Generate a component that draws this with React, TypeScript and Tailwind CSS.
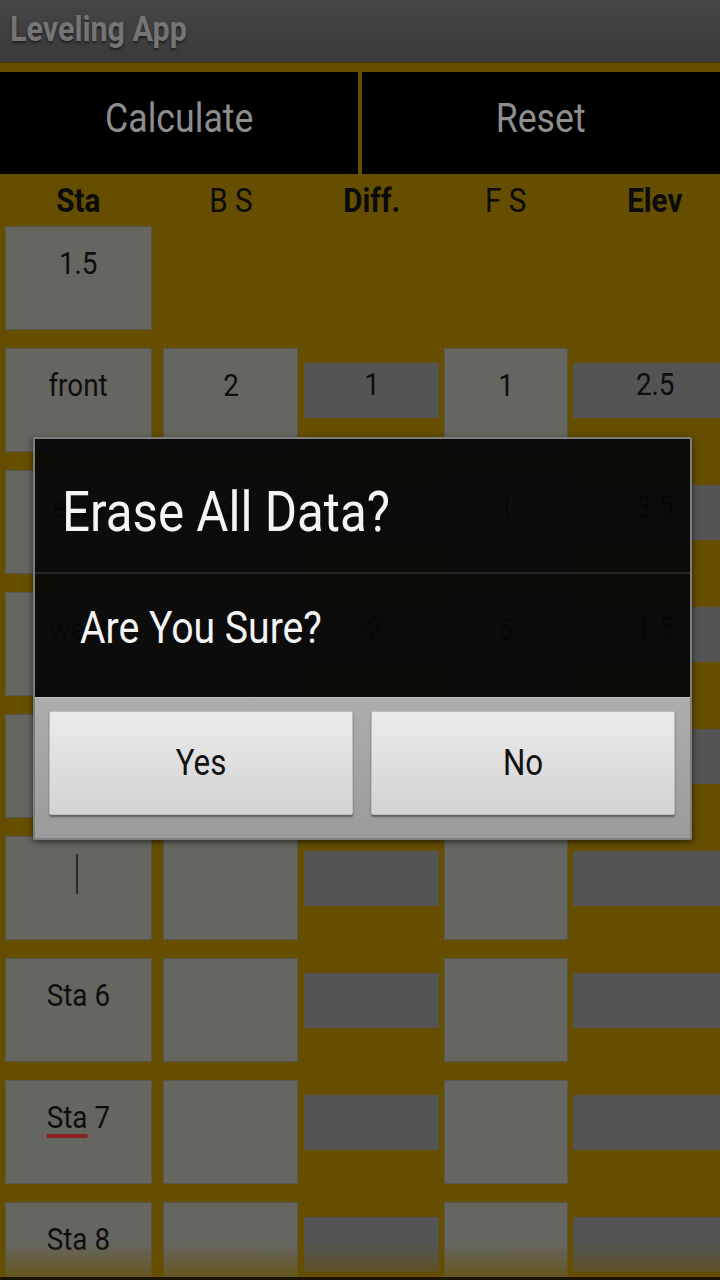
import React from "react";

type TProps = { children?: React.ReactNode; className?: string };

function T({ children, className = "" }: TProps) {
  return <span className={"inline-block scale-x-[0.87] whitespace-nowrap " + className}>{children}</span>;
}

type RowData = { sta?: React.ReactNode; bs?: string; diff?: string; fs?: string; elev?: string; onlySta?: boolean };

const cellText = "text-[32px] leading-none text-[#0e0e0e] text-center";

function Row({ d, first }: { d: RowData; first?: boolean }) {
  return (
    <div className={"flex h-[104px] shrink-0 " + (first ? "" : "mt-[18px]")}>
      <div className={"ml-[5px] w-[147px] shrink-0 h-full bg-[#666661] border border-[#58584f] pt-[20px] " + cellText}>
        {d.sta}
      </div>
      {!d.onlySta && (
        <>
          <div className={"ml-[11px] w-[135px] shrink-0 h-full bg-[#666661] border border-[#58584f] pt-[20px] " + cellText}>
            <T>{d.bs}</T>
          </div>
          <div className={"ml-[6px] w-[135px] shrink-0 mt-[15px] h-[55px] bg-[#545454] pt-[5px] " + cellText}>
            <T>{d.diff}</T>
          </div>
          <div className={"ml-[5px] w-[124px] shrink-0 h-full bg-[#666661] border border-[#58584f] pt-[20px] " + cellText}>
            <T>{d.fs}</T>
          </div>
          <div className={"ml-[5px] w-[164px] shrink-0 mt-[15px] h-[55px] bg-[#545454] pt-[5px] " + cellText}>
            <T>{d.elev}</T>
          </div>
        </>
      )}
    </div>
  );
}

export default function App() {
  const rows: RowData[] = [
    { sta: <T>1.5</T>, onlySta: true },
    { sta: <T>front</T>, bs: "2", diff: "1", fs: "1", elev: "2.5" },
    { sta: <T>east</T>, bs: "2", diff: "1", fs: "1", elev: "3.5" },
    { sta: <T>west</T>, bs: "4", diff: "-2", fs: "6", elev: "1.5" },
    { sta: <T>Sta 4</T> },
    {
      sta: (
        <div className="flex justify-center">
          <div className="ml-[-4px] mt-[-3px] w-[2px] h-[40px] bg-[#2a2a2a]" />
        </div>
      ),
    },
    { sta: <T>Sta 6</T> },
    {
      sta: (
        <T>
          <span className="underline decoration-[#8a2222] decoration-[4px] underline-offset-[6px]">Sta</span> 7
        </T>
      ),
    },
    { sta: <T>Sta 8</T> },
  ];

  return (
    <div className="relative w-[720px] h-[1280px] overflow-hidden bg-[#654e00] font-['Roboto','Liberation_Sans',sans-serif]">
      {/* action bar */}
      <div className="h-[62px] bg-gradient-to-b from-[#464646] to-[#3a3a3a] pl-[10px] pt-[12px]">
        <T className="origin-left text-[35px] leading-none font-bold text-[#757575] [text-shadow:0_2px_3px_rgba(0,0,0,0.55)]">
          Leveling App
        </T>
      </div>
      <div className="h-[10px] border-t border-[#4c3b00]" />
      {/* buttons */}
      <div className="flex h-[102px]">
        <div className="w-[358px] bg-black flex items-center justify-center pb-[10px]">
          <T className="scale-x-[0.84] text-[41px] leading-none text-[#8e8e8e]">Calculate</T>
        </div>
        <div className="w-[4px]" />
        <div className="flex-1 bg-black flex items-center justify-center pb-[10px]">
          <T className="scale-x-[0.84] text-[41px] leading-none text-[#8e8e8e]">Reset</T>
        </div>
      </div>
      {/* column labels */}
      <div className="flex h-[52px] pt-[9px] text-[34px] leading-none text-[#0b0b0b] text-center">
        <div className="ml-[5px] w-[147px] shrink-0 font-bold"><T>Sta</T></div>
        <div className="ml-[11px] w-[135px] shrink-0"><T>B S</T></div>
        <div className="ml-[6px] w-[135px] shrink-0 font-bold"><T>Diff.</T></div>
        <div className="ml-[5px] w-[124px] shrink-0"><T>F S</T></div>
        <div className="ml-[5px] w-[164px] shrink-0 font-bold"><T>Elev</T></div>
      </div>
      {/* rows */}
      <div className="flex flex-col">
        {rows.map((d, i) => (
          <Row key={i} d={d} first={i === 0} />
        ))}
      </div>

      {/* bottom edge fade */}
      <div className="absolute left-0 right-0 bottom-[3px] h-[34px] bg-gradient-to-b from-transparent to-[#654e00]/70" />
      <div className="absolute left-0 right-0 bottom-0 h-[3px] bg-[#1a1400]" />

      {/* dialog */}
      <div className="absolute left-[33px] top-[437px] w-[659px] border-2 border-[#7e7e7e] rounded-[2px] shadow-[0_2px_6px_rgba(0,0,0,0.6)]">
        <div className="h-[133px] bg-[#070707]/95 pl-[27px] pt-[45px]">
          <T className="origin-left scale-x-[0.88] text-[56px] leading-none text-[#f4f4f4]">Erase All Data?</T>
        </div>
        <div className="h-[2px] bg-[#262626]" />
        <div className="h-[123px] bg-[#070707]/95 pl-[45px] pt-[31px]">
          <T className="origin-left text-[45px] leading-none text-[#f4f4f4]">Are You Sure?</T>
        </div>
        <div className="h-[141px] bg-gradient-to-b from-[#adadad] to-[#9b9b9b] border-t border-[#c4c4c4] pl-[14px] pt-[13px] flex gap-[18px]">
          <button className="w-[304px] h-[104px] bg-gradient-to-b from-[#ebebeb] to-[#d3d3d3] border border-[#bdbdbd] rounded-[2px] shadow-[0_2px_2px_rgba(0,0,0,0.4)] flex items-center justify-center">
            <T className="text-[36px] leading-none text-[#111]">Yes</T>
          </button>
          <button className="w-[304px] h-[104px] bg-gradient-to-b from-[#ebebeb] to-[#d3d3d3] border border-[#bdbdbd] rounded-[2px] shadow-[0_2px_2px_rgba(0,0,0,0.4)] flex items-center justify-center">
            <T className="text-[36px] leading-none text-[#111]">No</T>
          </button>
        </div>
      </div>
    </div>
  );
}
